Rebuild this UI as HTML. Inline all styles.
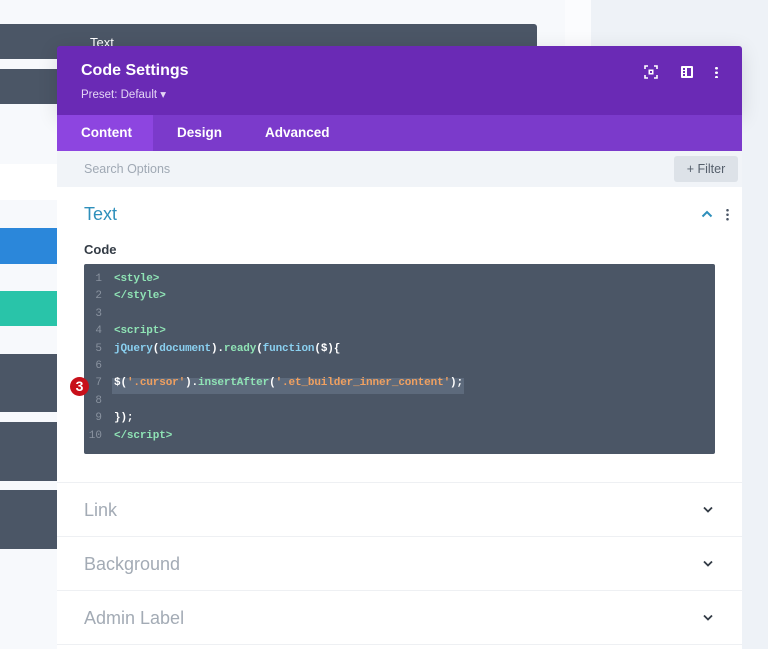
<!DOCTYPE html>
<html><head><style>
*{margin:0;padding:0;box-sizing:border-box}
body{width:768px;height:649px;overflow:hidden;background:#eef2f7;font-family:"Liberation Sans",sans-serif;position:relative}
.a{position:absolute}
.ico{fill:none;stroke:#fff;stroke-width:1.6}
.code div{height:17.4px;line-height:17.4px;white-space:pre}
.ln{display:inline-block;width:30px;text-align:right;color:#8a93a0;font-weight:normal;padding-right:12px;letter-spacing:0}
.sec{position:absolute;left:57px;width:685px;background:#fff;border-top:1px solid #eef0f3;font-size:18px;color:#a3abb5;padding-left:27px}
</style></head><body>
<div class="a" style="left:0;top:0;width:565px;height:649px;background:#f7f9fc"></div>
<div class="a" style="left:565px;top:0;width:26px;height:649px;background:#fbfcfe"></div>
<div class="a" style="left:0;top:24px;width:537px;height:35px;background:#4b5666;border-radius:0 3px 3px 0"></div>
<div class="a" style="left:90px;top:35px;color:#fff;font-size:13px">Text</div>
<div class="a" style="left:0;top:69px;width:60px;height:35px;background:#4b5666"></div>
<div class="a" style="left:0;top:164px;width:60px;height:36px;background:#ffffff"></div>
<div class="a" style="left:0;top:228px;width:60px;height:36px;background:#2b87da"></div>
<div class="a" style="left:0;top:291px;width:60px;height:35px;background:#29c4a9"></div>
<div class="a" style="left:0;top:354px;width:60px;height:58px;background:#4b5666"></div>
<div class="a" style="left:0;top:422px;width:60px;height:59px;background:#4b5666"></div>
<div class="a" style="left:0;top:490px;width:60px;height:59px;background:#4b5666"></div>

<div class="a" style="left:57px;top:46px;width:685px;height:69px;background:#6a2ab5;border-radius:3px 3px 0 0;box-shadow:0 4px 20px rgba(0,0,0,.12)"></div>
<div class="a" style="left:81px;top:62px;color:#fff;font-size:16px;font-weight:bold">Code Settings</div>
<div class="a" style="left:81px;top:87px;color:#e4d6f5;font-size:11.5px">Preset: Default ▾</div>
<svg class="a" style="left:643px;top:64px" width="16" height="16" viewBox="0 0 16 16"><path class="ico" d="M2 5V2h3M11 2h3v3M14 11v3h-3M5 14H2v-3"/><rect x="5.5" y="5.5" width="5" height="5" fill="#fff"/><rect x="7" y="7" width="2" height="2" fill="#6a2ab5"/></svg>
<svg class="a" style="left:680px;top:65px" width="14" height="14" viewBox="0 0 14 14"><rect x="1" y="1" width="12" height="12" rx="1" fill="#fff"/><rect x="3" y="3" width="2" height="2" fill="#6a2ab5"/><rect x="3" y="6" width="2" height="2" fill="#6a2ab5"/><rect x="3" y="9" width="2" height="2" fill="#6a2ab5"/><rect x="7" y="3" width="4" height="8" fill="#6a2ab5"/></svg>
<div class="a" style="left:715px;top:66px;width:3px;height:12px;background:radial-gradient(circle,#fff 1.3px,transparent 1.5px) 0 0/3px 4.5px"></div>

<div class="a" style="left:57px;top:115px;width:685px;height:36px;background:#7b3acb"></div>
<div class="a" style="left:57px;top:115px;width:96px;height:36px;background:#8d45e0"></div>
<div class="a" style="left:81px;top:125px;color:#fff;font-size:13.5px;font-weight:bold">Content</div>
<div class="a" style="left:177px;top:125px;color:#fff;font-size:13.5px;font-weight:bold">Design</div>
<div class="a" style="left:265px;top:125px;color:#fff;font-size:13.5px;font-weight:bold">Advanced</div>

<div class="a" style="left:57px;top:151px;width:685px;height:36px;background:#f1f4f8"></div>
<div class="a" style="left:84px;top:162px;color:#a0a9b4;font-size:12.5px">Search Options</div>
<div class="a" style="left:674px;top:156px;width:64px;height:26px;background:#dde2e8;border-radius:3px;color:#555f6b;font-size:12.5px;line-height:26px;text-align:center">+ Filter</div>

<div class="a" style="left:57px;top:187px;width:685px;height:295px;background:#fff"></div>
<div class="a" style="left:84px;top:204px;color:#2e8fbb;font-size:18px">Text</div>
<svg class="a" style="left:701px;top:210px" width="12" height="8" viewBox="0 0 12 8"><path d="M1.5 6.5L6 2l4.5 4.5" fill="none" stroke="#2e8fbb" stroke-width="2"/></svg>
<div class="a" style="left:726px;top:208px;width:3px;height:13px;background:radial-gradient(circle,#4b5666 1.2px,transparent 1.4px) 0 0/3px 4.5px"></div>
<div class="a" style="left:84px;top:242px;color:#333b45;font-size:13px;font-weight:bold">Code</div>
<div class="a" style="left:84px;top:264px;width:631px;height:190px;background:#4b5666;border-radius:2px"></div>
<div class="a" style="left:112px;top:378px;width:352px;height:16px;background:#5d6a7c"></div>
<div class="a code" style="left:84px;top:271px;font-family:'Liberation Mono',monospace;font-size:11px;font-weight:bold;color:#fff;letter-spacing:-0.14px">
<div><span class="ln">1</span><span style="color:#8fe3b5">&lt;style&gt;</span></div>
<div><span class="ln">2</span><span style="color:#8fe3b5">&lt;/style&gt;</span></div>
<div><span class="ln">3</span></div>
<div><span class="ln">4</span><span style="color:#8fe3b5">&lt;script&gt;</span></div>
<div><span class="ln">5</span><span style="color:#8ad0f0">jQuery</span>(<span style="color:#8ad0f0">document</span>).<span style="color:#8fe3b5">ready</span>(<span style="color:#8ad0f0">function</span>($){</div>
<div><span class="ln">6</span></div>
<div><span class="ln">7</span>$(<span style="color:#f0a060">'.cursor'</span>).<span style="color:#8fe3b5">insertAfter</span>(<span style="color:#f0a060">'.et_builder_inner_content'</span>);</div>
<div><span class="ln">8</span></div>
<div><span class="ln">9</span>});</div>
<div><span class="ln">10</span><span style="color:#8fe3b5">&lt;/script&gt;</span></div>
</div>
<div class="a" style="left:70px;top:377px;width:19px;height:19px;border-radius:50%;background:#c8101a;color:#fff;font-size:14px;font-weight:bold;text-align:center;line-height:19px">3</div>

<div class="sec" style="top:482px;height:54px;line-height:54px">Link</div>
<div class="sec" style="top:536px;height:54px;line-height:54px">Background</div>
<div class="sec" style="top:590px;height:54px;line-height:54px">Admin Label</div>
<div class="sec" style="top:644px;height:5px"></div>
<svg class="a" style="left:703px;top:506px" width="10" height="7" viewBox="0 0 10 7"><path d="M1 1.5l4 4 4-4" fill="none" stroke="#333b45" stroke-width="1.8"/></svg>
<svg class="a" style="left:703px;top:560px" width="10" height="7" viewBox="0 0 10 7"><path d="M1 1.5l4 4 4-4" fill="none" stroke="#333b45" stroke-width="1.8"/></svg>
<svg class="a" style="left:703px;top:614px" width="10" height="7" viewBox="0 0 10 7"><path d="M1 1.5l4 4 4-4" fill="none" stroke="#333b45" stroke-width="1.8"/></svg>
</body></html>
